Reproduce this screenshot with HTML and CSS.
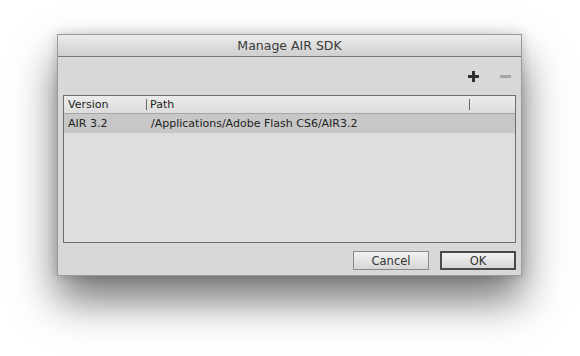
FILE: index.html
```html
<!DOCTYPE html>
<html lang="en">
<head>
  <meta charset="UTF-8" />
  <title>Manage AIR SDK</title>
  <link rel="stylesheet" href="styles.css">
</head>
<body>

  <div class="dialog">
    <div class="titlebar">Manage AIR SDK</div>

    <div class="content">
      <div class="toolbar">
        <span class="tool plus">
          <svg width="11" height="11" viewBox="0 0 11 11"><path d="M4 0h3v4h4v3H7v4H4V7H0V4h4z" fill="#2e2e2e"/></svg>
        </span>
        <span class="tool minus">
          <svg width="11" height="11" viewBox="0 0 11 11"><path d="M0 4h11v3H0z" fill="#a4a4a4"/></svg>
        </span>
      </div>

      <div class="table">
        <div class="thead">
          <div class="col version">Version</div>
          <div class="col path">Path</div>
          <div class="col rest"></div>
        </div>
        <div class="row selected">
          <div class="col version">AIR 3.2</div>
          <div class="col path">/Applications/Adobe Flash CS6/AIR3.2</div>
        </div>
      </div>

      <div class="buttons">
        <button type="button" class="btn">Cancel</button>
        <button type="button" class="btn default">OK</button>
      </div>
    </div>
  </div>

</body>
</html>
```

FILE: styles.css
```css
html, body {
  margin: 0;
  min-height: 356px;
  background: #ffffff;
}
body {
  font-family: "DejaVu Sans", Verdana, sans-serif;
  color: #222;
  padding-top: 34px;
  box-sizing: border-box;
}
.dialog {
  margin: 0 0 0 57px;
  width: 465px;
  height: 242px;
  display: flex;
  flex-direction: column;
  background: #d8d8d8;
  border: 1px solid #9a9a9a;
  box-sizing: border-box;
  box-shadow: 0 24px 40px rgba(0,0,0,0.55), 0 0 10px rgba(0,0,0,0.18);
}
.titlebar {
  height: 21px;
  line-height: 21px;
  text-align: center;
  font-size: 12.5px;
  color: #3a3a3a;
  background: linear-gradient(#ececec, #cfcfcf);
  border-bottom: 1px solid #7a7a7a;
}
.content {
  flex: 1;
  display: flex;
  flex-direction: column;
  padding: 0 5px 5px 5px;
}
.toolbar {
  height: 38px;
  display: flex;
  justify-content: flex-end;
  align-items: center;
  gap: 21px;
  padding: 0 5px 0 0;
}
.tool {
  display: flex;
  padding-top: 1px;
}
.table {
  height: 148px;
  box-sizing: border-box;
  border: 1px solid #6e6e6e;
  background: #dedede;
  font-size: 11px;
}
.thead {
  display: flex;
  height: 17px;
  line-height: 17px;
  background: linear-gradient(#ececec, #dcdcdc);
  border-bottom: 1px solid #a8a8a8;
}
.thead .col {
  border-right: 1px solid #666;
  margin: 3px 0;
  line-height: 11px;
}
.thead .rest {
  flex: 1;
  border-right: none;
}
.col.version {
  width: 78px;
  padding-left: 4px;
}
.col.path {
  width: 319px;
  padding-left: 3px;
}
.row {
  display: flex;
  height: 19px;
  line-height: 19px;
}
.row .col.path {
  padding-left: 5px;
}
.row.selected {
  background: #c7c7c7;
}
.buttons {
  display: flex;
  justify-content: flex-end;
  gap: 11px;
  margin-top: 8px;
}
.btn {
  width: 76px;
  height: 19px;
  padding: 0;
  font-family: inherit;
  font-size: 11.5px;
  color: #333;
  background: linear-gradient(#f2f2f2, #d6d6d6);
  border: 1px solid #8c8c8c;
  border-radius: 0;
}
.btn.default {
  border: 2px solid #4a4a4a;
}
```
